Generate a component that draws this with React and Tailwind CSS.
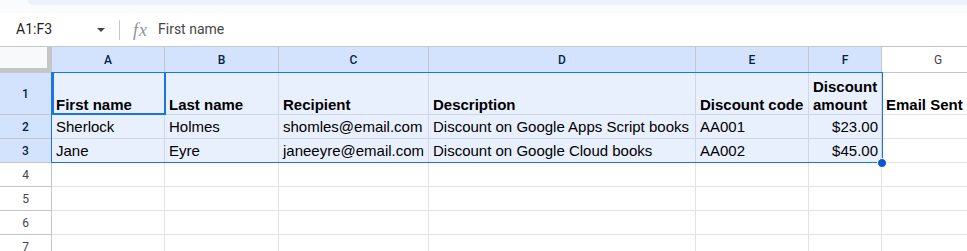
import React from 'react'

const cols = [
  { l: 'A', w: 'w-[113px]', sel: true },
  { l: 'B', w: 'w-[114px]', sel: true },
  { l: 'C', w: 'w-[150px]', sel: true },
  { l: 'D', w: 'w-[267px]', sel: true },
  { l: 'E', w: 'w-[113px]', sel: true },
  { l: 'F', w: 'w-[73px]', sel: true },
  { l: 'G', w: 'w-[113px]', sel: false },
]

const rows = [
  { n: 1, h: 'h-[42px]', sel: true, bold: true, cells: ['First name', 'Last name', 'Recipient', 'Description', 'Discount code', 'Discount amount', 'Email Sent'] },
  { n: 2, h: 'h-[24px]', sel: true, cells: ['Sherlock', 'Holmes', 'shomles@email.com', 'Discount on Google Apps Script books', 'AA001', '$23.00', ''] },
  { n: 3, h: 'h-[24px]', sel: true, cells: ['Jane', 'Eyre', 'janeeyre@email.com', 'Discount on Google Cloud books', 'AA002', '$45.00', ''] },
  { n: 4, h: 'h-[24px]', cells: [] },
  { n: 5, h: 'h-[24px]', cells: [] },
  { n: 6, h: 'h-[24px]', cells: [] },
  { n: 7, h: 'h-[24px]', cells: [] },
]

function HeaderCell({ col }) {
  return (
    <div
      className={`${col.w} shrink-0 h-full flex items-center justify-center border-r border-[#c4c7c5] text-[12px] ${
        col.sel ? 'bg-[#d3e3fd] text-[#041e49] font-medium' : 'bg-white text-[#444746]'
      }`}
    >
      {col.l}
    </div>
  )
}

function Cell({ col, row, i }) {
  const text = row.cells[i] || ''
  const inSel = row.sel && col.sel
  const right = text.startsWith('$')
  return (
    <div
      className={`${col.w} shrink-0 h-full border-r border-b flex px-[4px] text-[15px] leading-[18px] text-black whitespace-nowrap ${
        inSel ? 'bg-[#e8f0fe] border-[#cfd7e5]' : 'bg-white border-[#e2e2e2]'
      } ${row.bold ? 'font-bold items-end' : 'items-center'} ${right ? 'justify-end pr-[3px]' : ''}`}
    >
      <span className={col.l === 'F' ? 'whitespace-normal' : ''}>{text}</span>
    </div>
  )
}

export default function App() {
  return (
    <div className="w-[967px] h-[251px] overflow-hidden bg-white font-['Liberation_Sans',Arial,sans-serif]">
      {/* toolbar edge */}
      <div className="h-[13px] bg-[#f9fbfd] pl-[28px]">
        <div className="h-[5px] bg-[#edf2fa] rounded-bl-[10px]" />
      </div>

      {/* formula bar */}
      <div className="h-[33px] flex items-center font-['Roboto',sans-serif] text-[14px]">
        <div className="w-[119px] flex items-center pl-[16px] pr-[14px] text-[#1f1f1f]">
          <span>A1:F3</span>
          <div className="flex-1" />
          <div className="w-0 h-0 border-l-[4px] border-r-[4px] border-t-[4px] border-l-transparent border-r-transparent border-t-[#444746]" />
        </div>
        <div className="w-px h-[20px] bg-[#c4c7c5]" />
        <span className="ml-[13px] font-['Liberation_Serif',serif] italic text-[18px] text-[#8f9497] leading-none tracking-[1px]">fx</span>
        <span className="ml-[10px] text-[#444746]">First name</span>
      </div>

      {/* grid */}
      <div className="relative">
        <div className="flex h-[27px] border-t border-b border-[#c4c7c5] font-['Roboto',sans-serif]">
          <div className="w-[52px] shrink-0 h-full bg-[#f8f9fa] border-r-[5px] border-b-[4px] border-[#c4c7c5]" />
          {cols.map(c => (
            <HeaderCell key={c.l} col={c} />
          ))}
        </div>

        {rows.map(r => (
          <div key={r.n} className={`flex ${r.h}`}>
            <div
              className={`w-[52px] shrink-0 h-full flex items-center justify-center border-r border-b border-[#c4c7c5] font-['Roboto',sans-serif] text-[12px] ${
                r.sel ? 'bg-[#d3e3fd] text-[#041e49] font-medium' : 'bg-white text-[#444746]'
              }`}
            >
              {r.n}
            </div>
            {cols.map((c, i) => (
              <Cell key={c.l} col={c} row={r} i={i} />
            ))}
          </div>
        ))}

        {/* range selection */}
        <div className="absolute left-[51px] top-[26px] w-[832px] h-[91px] border border-[#1a73e8] pointer-events-none" />
        {/* active cell */}
        <div className="absolute left-[52px] top-[27px] w-[114px] h-[42px] border-l-2 border-r-2 border-b-2 border-[#1a73e8] pointer-events-none" />
        {/* fill handle */}
        <div className="absolute left-[877px] top-[112px] w-[10px] h-[10px] rounded-full bg-[#0b57d0] border border-white" />
      </div>
    </div>
  )
}
